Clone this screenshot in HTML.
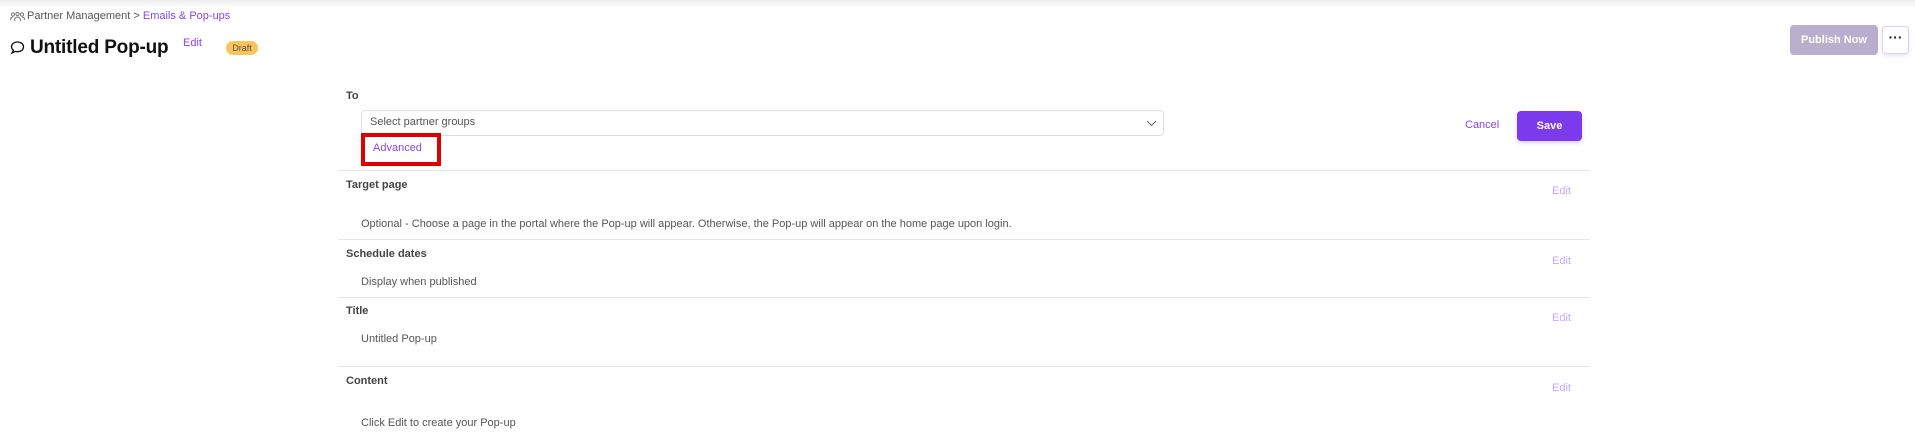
<!DOCTYPE html>
<html><head><meta charset="utf-8"><style>
*{margin:0;padding:0;box-sizing:border-box}
body{width:1915px;height:448px;background:#fff;font-family:"Liberation Sans",sans-serif;position:relative;overflow:hidden;color:#333}
.a{position:absolute;white-space:nowrap}
.topbar{position:absolute;left:0;top:0;width:1915px;height:8px;background:linear-gradient(#eee,#fff)}
.hr{position:absolute;left:338px;width:1252px;height:1px;background:#e3e6e8}
.lbl{font-size:11px;font-weight:bold;color:#444;left:346px}
.txt{font-size:11px;color:#555;left:361px}
.edit{font-size:11px;color:#c9a8f5;left:1552px}
</style></head><body>
<div class="topbar"></div>
<svg class="a" style="left:10px;top:12px" width="15" height="10" viewBox="0 0 15 10" fill="none" stroke="#777" stroke-width="1"><circle cx="3" cy="2.5" r="1.6"/><circle cx="7.5" cy="2" r="1.6"/><circle cx="12" cy="2.5" r="1.6"/><path d="M0.5 8c0-2 1-3 2.5-3M4.5 9c0-3 1.3-4 3-4s3 1 3 4M14.5 8c0-2-1-3-2.5-3"/></svg>
<div class="a" style="left:27px;top:10px;font-size:11px;color:#555">Partner Management &gt; <span style="color:#8b45f0">Emails &amp; Pop-ups</span></div>
<svg class="a" style="left:10px;top:40px" width="15" height="15" viewBox="0 0 15 15" fill="none" stroke="#111" stroke-width="1.3"><path d="M7.5 2C4 2 1.5 4 1.5 6.8c0 1.5.8 2.7 2 3.5L2 13l3.5-1.6c.6.2 1.3.3 2 .3 3.5 0 6-2 6-4.9S11 2 7.5 2z"/></svg>
<div class="a" style="left:30px;top:37px;font-size:19px;font-weight:bold;color:#111;letter-spacing:-0.2px">Untitled Pop-up</div>
<div class="a" style="left:183px;top:37px;font-size:11px;color:#8b45f0">Edit</div>
<div class="a" style="left:226px;top:41px;width:32px;height:14px;border-radius:7px;background:#f8c55a;font-size:9px;color:#555;text-align:center;line-height:14px">Draft</div>
<div class="a" style="left:1790px;top:25px;width:88px;height:30px;border-radius:4px;background:#b9aecb;color:#fff;font-size:11px;font-weight:bold;text-align:center;line-height:30px">Publish Now</div>
<div class="a" style="left:1882px;top:26px;width:27px;height:28px;border-radius:4px;border:1px solid #d8d2ea;box-shadow:0 2px 4px rgba(120,90,200,.15);font-size:14px;font-weight:bold;color:#222;text-align:center;line-height:20px">···</div>

<div class="a lbl" style="top:90px">To</div>
<div class="a" style="left:361px;top:110px;width:803px;height:26px;border:1px solid #dde0e3;border-radius:4px"></div>
<div class="a txt" style="left:370px;top:116px;color:#555">Select partner groups</div>
<svg class="a" style="left:1146px;top:120px" width="11" height="7" viewBox="0 0 11 7" fill="none" stroke="#666" stroke-width="1"><path d="M1 1l4.5 4.5L10 1"/></svg>
<div class="a" style="left:361px;top:133px;width:80px;height:33px;border:4px solid #e00000"></div>
<div class="a" style="left:373px;top:142px;font-size:11px;color:#8b45f0">Advanced</div>
<div class="a" style="left:1465px;top:119px;font-size:11px;color:#8b45f0">Cancel</div>
<div class="a" style="left:1517px;top:111px;width:65px;height:30px;border-radius:4px;background:#7c3aed;color:#fff;font-size:11px;font-weight:bold;text-align:center;line-height:30px;box-shadow:0 2px 4px rgba(124,58,237,.25)">Save</div>

<div class="hr" style="top:170px"></div>
<div class="a lbl" style="top:179px">Target page</div>
<div class="a edit" style="top:185px">Edit</div>
<div class="a txt" style="top:218px">Optional - Choose a page in the portal where the Pop-up will appear. Otherwise, the Pop-up will appear on the home page upon login.</div>
<div class="hr" style="top:239px"></div>
<div class="a lbl" style="top:248px">Schedule dates</div>
<div class="a edit" style="top:255px">Edit</div>
<div class="a txt" style="top:276px">Display when published</div>
<div class="hr" style="top:297px"></div>
<div class="a lbl" style="top:305px">Title</div>
<div class="a edit" style="top:312px">Edit</div>
<div class="a txt" style="top:333px">Untitled Pop-up</div>
<div class="hr" style="top:366px"></div>
<div class="a lbl" style="top:375px">Content</div>
<div class="a edit" style="top:382px">Edit</div>
<div class="a txt" style="top:417px">Click Edit to create your Pop-up</div>
</body></html>
